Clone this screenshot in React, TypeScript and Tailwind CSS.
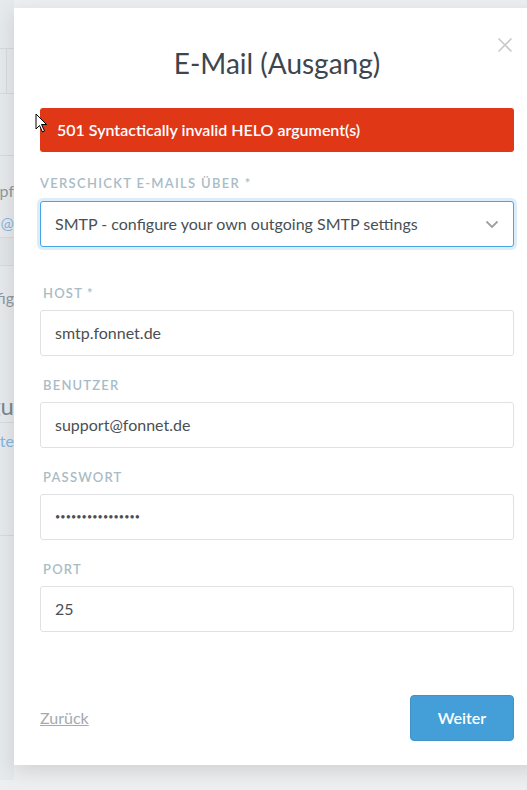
import React from "react";

const font = { fontFamily: "Lato, 'Open Sans', 'Liberation Sans', sans-serif" };

function Field({ label, value, mt, dots }: { label: string; value: string; mt: string; dots?: boolean }) {
  return (
    <div className={`flex flex-col ${mt}`}>
      <div className="h-[16px] pl-[3px] text-[13px] leading-[16px] tracking-[1.2px] text-[#a9bcc6] font-semibold uppercase">{label}</div>
      <div
        className={`mt-[9px] h-[46px] rounded-[3px] border border-[#dfe2e4] bg-white flex items-center px-[14px] text-[#4a4f53] ${
          dots ? "text-[9px] tracking-[0.1px]" : "text-[16px]"
        }`}
      >
        {value}
      </div>
    </div>
  );
}

export default function App() {
  return (
    <div className="w-[527px] h-[790px] overflow-hidden bg-[#eceef0] flex" style={font}>
      {/* background page strip */}
      <div className="w-[14px] shrink-0 h-[780px] bg-[#e6e9ec] overflow-hidden flex flex-col text-[#8f989d]">
        <div className="h-[48px] shrink-0" />
        <div className="h-[45px] shrink-0 border-t border-[#d6dadd] flex">
          <div className="w-[7px] border-r border-[#d6dadd]" />
        </div>
        <div className="h-[62px] shrink-0 border-t border-[#d6dadd]" />
        <div className="h-[82px] shrink-0 border-t border-[#d6dadd] flex flex-col pt-[25px]">
          <div className="flex justify-end whitespace-nowrap text-[16px] leading-[20px]">pf</div>
          <div className="flex justify-end whitespace-nowrap text-[16px] leading-[20px] mt-[12px] text-[#86b6dc]">@</div>
        </div>
        <div className="h-[28px] shrink-0 border-t border-[#d6dadd] bg-[#e2e5e8]" />
        <div className="h-[157px] shrink-0 border-t border-[#d6dadd] flex flex-col pt-[22px]">
          <div className="flex justify-end whitespace-nowrap text-[16px] leading-[20px]">fig</div>
          <div className="flex justify-end whitespace-nowrap text-[24px] leading-[30px] mt-[83px] text-[#7c868c]">gu</div>
        </div>
        <div className="h-[113px] shrink-0 border-t border-[#d6dadd] pt-[8px]">
          <div className="flex justify-end whitespace-nowrap text-[16px] leading-[20px] text-[#86b6dc]">te</div>
        </div>
        <div className="h-[20px] shrink-0 border-t border-[#d6dadd]" />
      </div>

      {/* modal */}
      <div className="relative w-[526px] shrink-0 mt-[8px] h-[757px] bg-white shadow-[0_6px_18px_rgba(0,0,0,0.12)] px-[26px] flex flex-col">
        <button className="absolute right-[27px] top-[29px] w-[16px] h-[16px] flex items-center justify-center">
          <svg width="16" height="16" viewBox="0 0 16 16">
            <path d="M1.5 1.5L14.5 14.5M14.5 1.5L1.5 14.5" stroke="#c8cacc" strokeWidth="1.6" />
          </svg>
        </button>

        <div className="pt-[38px] h-[100px] text-center text-[28px] leading-[34px] text-[#3d464d]">E-Mail (Ausgang)</div>

        <div className="relative h-[44px] rounded-[3px] bg-[#e03816] flex items-center px-[17px] text-[16px] font-semibold text-white">
          501 Syntactically invalid HELO argument(s)
          <svg className="absolute left-[-5px] top-[5px]" width="13" height="20" viewBox="0 0 13 20">
            <path d="M1 1 L1 16 L4.5 12.5 L7.5 19 L9.5 18 L6.5 11.5 L11.5 11.5 Z" fill="#fff" stroke="#000" strokeWidth="1" strokeLinejoin="round" />
          </svg>
        </div>

        <div className="mt-[23px] flex flex-col">
          <div className="h-[16px] text-[13px] leading-[16px] tracking-[1.3px] text-[#a9bcc6] font-semibold uppercase">Verschickt E-Mails über *</div>
          <div className="mt-[10px] h-[46px] rounded-[3px] border border-[#4aa3e2] shadow-[0_0_0_3px_#dcecf8] bg-white flex items-center justify-between pl-[14px] pr-[14px] text-[16px] text-[#4a4f53]">
            <span>SMTP - configure your own outgoing SMTP settings</span>
            <svg width="14" height="9" viewBox="0 0 14 9">
              <path d="M1.5 1.5L7 7L12.5 1.5" fill="none" stroke="#9aa0a4" strokeWidth="1.8" />
            </svg>
          </div>
        </div>

        <Field label="Host *" value="smtp.fonnet.de" mt="mt-[38px]" />
        <Field label="Benutzer" value="support@fonnet.de" mt="mt-[21px]" />
        <Field label="Passwort" value="••••••••••••••••" mt="mt-[21px]" dots />
        <Field label="Port" value="25" mt="mt-[21px]" />

        <div className="mt-[63px] flex items-center justify-between">
          <a className="text-[16px] text-[#a3aaae] underline">Zurück</a>
          <button className="w-[104px] h-[46px] rounded-[4px] bg-[#449fd8] border border-[#3f93c8] text-white text-[16px] font-semibold">
            Weiter
          </button>
        </div>
      </div>
    </div>
  );
}
